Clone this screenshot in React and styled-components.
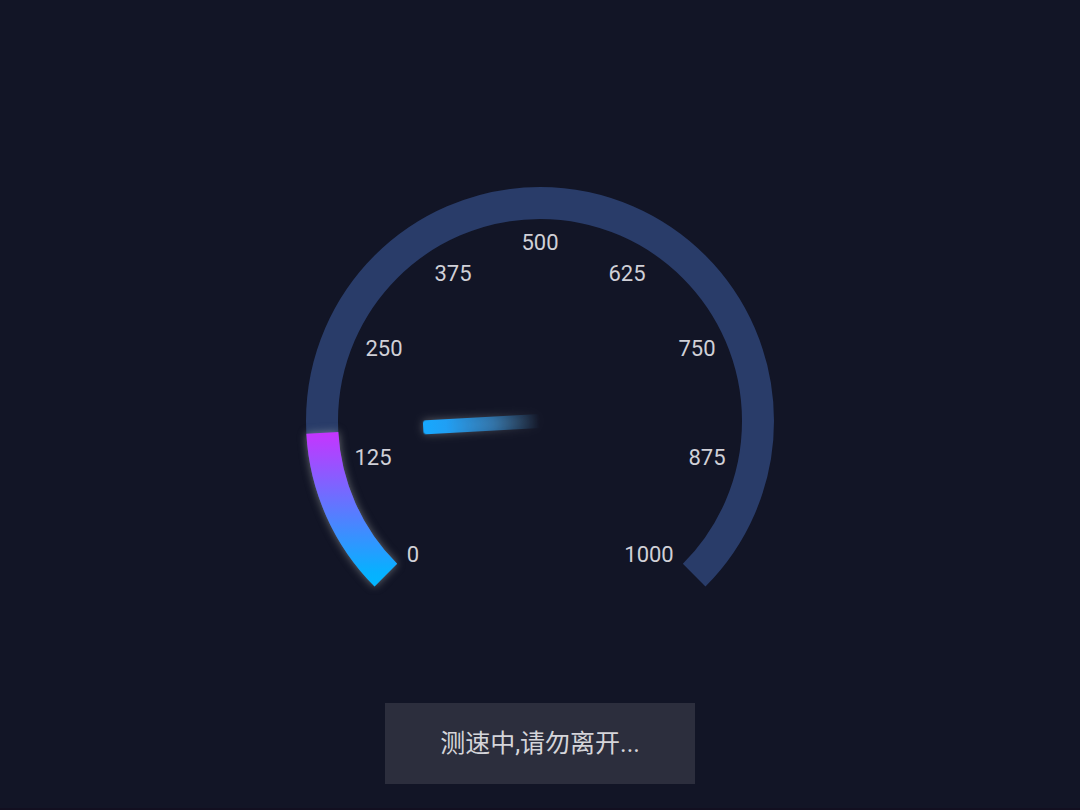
import React from 'react';
import styled, { createGlobalStyle } from 'styled-components';

const CENTER = 234;
const RADIUS = 218;
const START = 225;
const SWEEP = 270;
const MAX = 1000;

const labels = [
  { value: 0, x: 107, y: 367 },
  { value: 125, x: 67, y: 270 },
  { value: 250, x: 78, y: 161 },
  { value: 375, x: 147, y: 86 },
  { value: 500, x: 234, y: 55 },
  { value: 625, x: 321, y: 86 },
  { value: 750, x: 391, y: 161 },
  { value: 875, x: 401, y: 270 },
  { value: 1000, x: 343, y: 367 },
];

const toAngle = (value) => START - (value / MAX) * SWEEP;

const pointAt = (value) => {
  const rad = (toAngle(value) * Math.PI) / 180;
  return `${CENTER + RADIUS * Math.cos(rad)} ${CENTER - RADIUS * Math.sin(rad)}`;
};

const arcPath = (value) => {
  const large = (value / MAX) * SWEEP > 180 ? 1 : 0;
  return `M ${pointAt(0)} A ${RADIUS} ${RADIUS} 0 ${large} 1 ${pointAt(value)}`;
};

const Gauge = ({ speed }) => (
  <Dial viewBox="0 0 468 400" role="img" aria-label={`${speed} / ${MAX}`}>
    <defs>
      <linearGradient id="progress" gradientUnits="userSpaceOnUse" x1="0" y1="400" x2="0" y2="246">
        <stop offset="0" stopColor="#00b7ff" />
        <stop offset="0.1" stopColor="#08b0ff" />
        <stop offset="1" stopColor="#c535ff" />
      </linearGradient>
      <linearGradient id="needle" gradientUnits="userSpaceOnUse" x1="117" y1="0" x2="234" y2="0">
        <stop offset="0" stopColor="#16a9ff" />
        <stop offset="0.2" stopColor="#209ff4" />
        <stop offset="0.6" stopColor="#3092dc" stopOpacity="0.65" />
        <stop offset="1" stopColor="#3c8cc8" stopOpacity="0" />
      </linearGradient>
    </defs>
    <Track d={arcPath(MAX)} />
    <Progress d={arcPath(speed)} />
    {labels.map((label) => (
      <Label key={label.value} x={label.x} y={label.y + 8}>
        {label.value}
      </Label>
    ))}
    <Needle
      x="117"
      y="227"
      width="117"
      height="14"
      rx="3"
      transform={`rotate(${180 - toAngle(speed)} ${CENTER} ${CENTER})`}
    />
  </Dial>
);

const App = () => (
  <>
    <GlobalStyles />
    <Page>
      <Gauge speed={155} />
      <StatusButton type="button" disabled>
        测速中,请勿离开...
      </StatusButton>
    </Page>
  </>
);

const GlobalStyles = createGlobalStyle`
  * {
    box-sizing: border-box;
    margin: 0;
    padding: 0;
  }

  body {
    background: #121526;
    font-family: Roboto, 'Noto Sans CJK SC', sans-serif;
  }
`;

const Page = styled.main`
  min-height: 100vh;
  display: flex;
  flex-direction: column;
  align-items: center;
  justify-content: flex-end;
  gap: 116px;
  padding: 24px;
  border-bottom: 2px solid #120f20;
`;

const Dial = styled.svg`
  width: 468px;
  max-width: 100%;
  overflow: visible;
`;

const Track = styled.path`
  fill: none;
  stroke: #293c69;
  stroke-width: 32px;
`;

const Progress = styled.path`
  fill: none;
  stroke: url(#progress);
  stroke-width: 32px;
  filter: drop-shadow(0 0 4px rgba(190, 195, 190, 0.5));
`;

const Needle = styled.rect`
  fill: url(#needle);
  filter: drop-shadow(0 0 4px rgba(190, 195, 190, 0.4));
`;

const Label = styled.text`
  fill: #d0d0d7;
  font-size: 22px;
  text-anchor: middle;
`;

const StatusButton = styled.button`
  padding: 20px 55px;
  border: none;
  background: #2c2e3d;
  color: #d5d5da;
  font-family: inherit;
  font-size: 25px;
  line-height: 41px;
`;

export default App;
